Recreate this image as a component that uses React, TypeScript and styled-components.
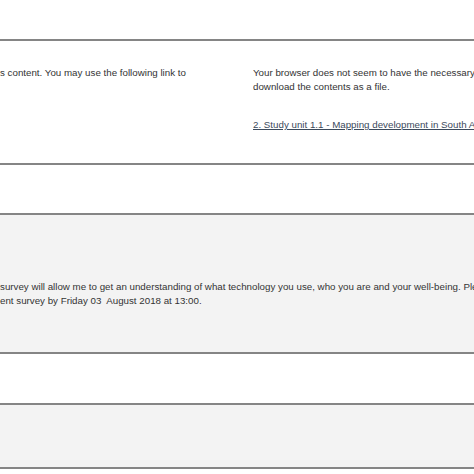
import React from 'react';
import styled, { createGlobalStyle } from 'styled-components';

const GlobalStyle = createGlobalStyle`
  html, body {
    margin: 0;
    padding: 0;
    background: #ffffff;
  }
  body {
    font-family: "Liberation Sans", Arial, sans-serif;
    color: #333333;
    overflow: hidden;
  }
`;

const Page = styled.div`
  width: 474px;
  display: flex;
  flex-direction: column;
  padding-top: 39px;
`;

const Section = styled.section<{ shaded?: boolean; height: number }>`
  height: ${props => props.height}px;
  border-top: 2px solid #858585;
  background-color: ${props => (props.shaded ? '#f3f3f3' : '#ffffff')};
  box-sizing: border-box;
  overflow: hidden;
`;

const Columns = styled.div`
  display: grid;
  grid-template-columns: 253px 221px;
  padding-top: 25px;
`;

const Column = styled.div`
  min-width: 0;
`;

const Text = styled.p`
  margin: 0;
  font-size: 9.75px;
  line-height: 14px;
  white-space: nowrap;
  overflow: hidden;
`;

const LinkRow = styled.p`
  margin: 24px 0 0;
  font-size: 9.75px;
  line-height: 14px;
  white-space: nowrap;
  overflow: hidden;
`;

const UnitLink = styled.a`
  color: #3c4a5c;
  text-decoration: underline;
`;

const Announcement = styled.div`
  padding-top: 65px;
`;

const App: React.FC = () => {
  return (
    <>
      <GlobalStyle />
      <Page>
        <Section height={124}>
          <Columns>
            <Column>
              <Text>s content. You may use the following link to</Text>
            </Column>
            <Column>
              <Text>Your browser does not seem to have the necessary</Text>
              <Text>download the contents as a file.</Text>
              <LinkRow>
                <UnitLink href="#">2. Study unit 1.1 - Mapping development in South Africa</UnitLink>
              </LinkRow>
            </Column>
          </Columns>
        </Section>
        <Section height={50} />
        <Section shaded height={139}>
          <Announcement>
            <Text>survey will allow me to get an understanding of what technology you use, who you are and your well-being. Please</Text>
            <Text>ent survey by Friday 03&nbsp; August 2018 at 13:00.</Text>
          </Announcement>
        </Section>
        <Section height={51} />
        <Section shaded height={64} />
        <Section height={8} />
      </Page>
    </>
  );
};

export default App;
